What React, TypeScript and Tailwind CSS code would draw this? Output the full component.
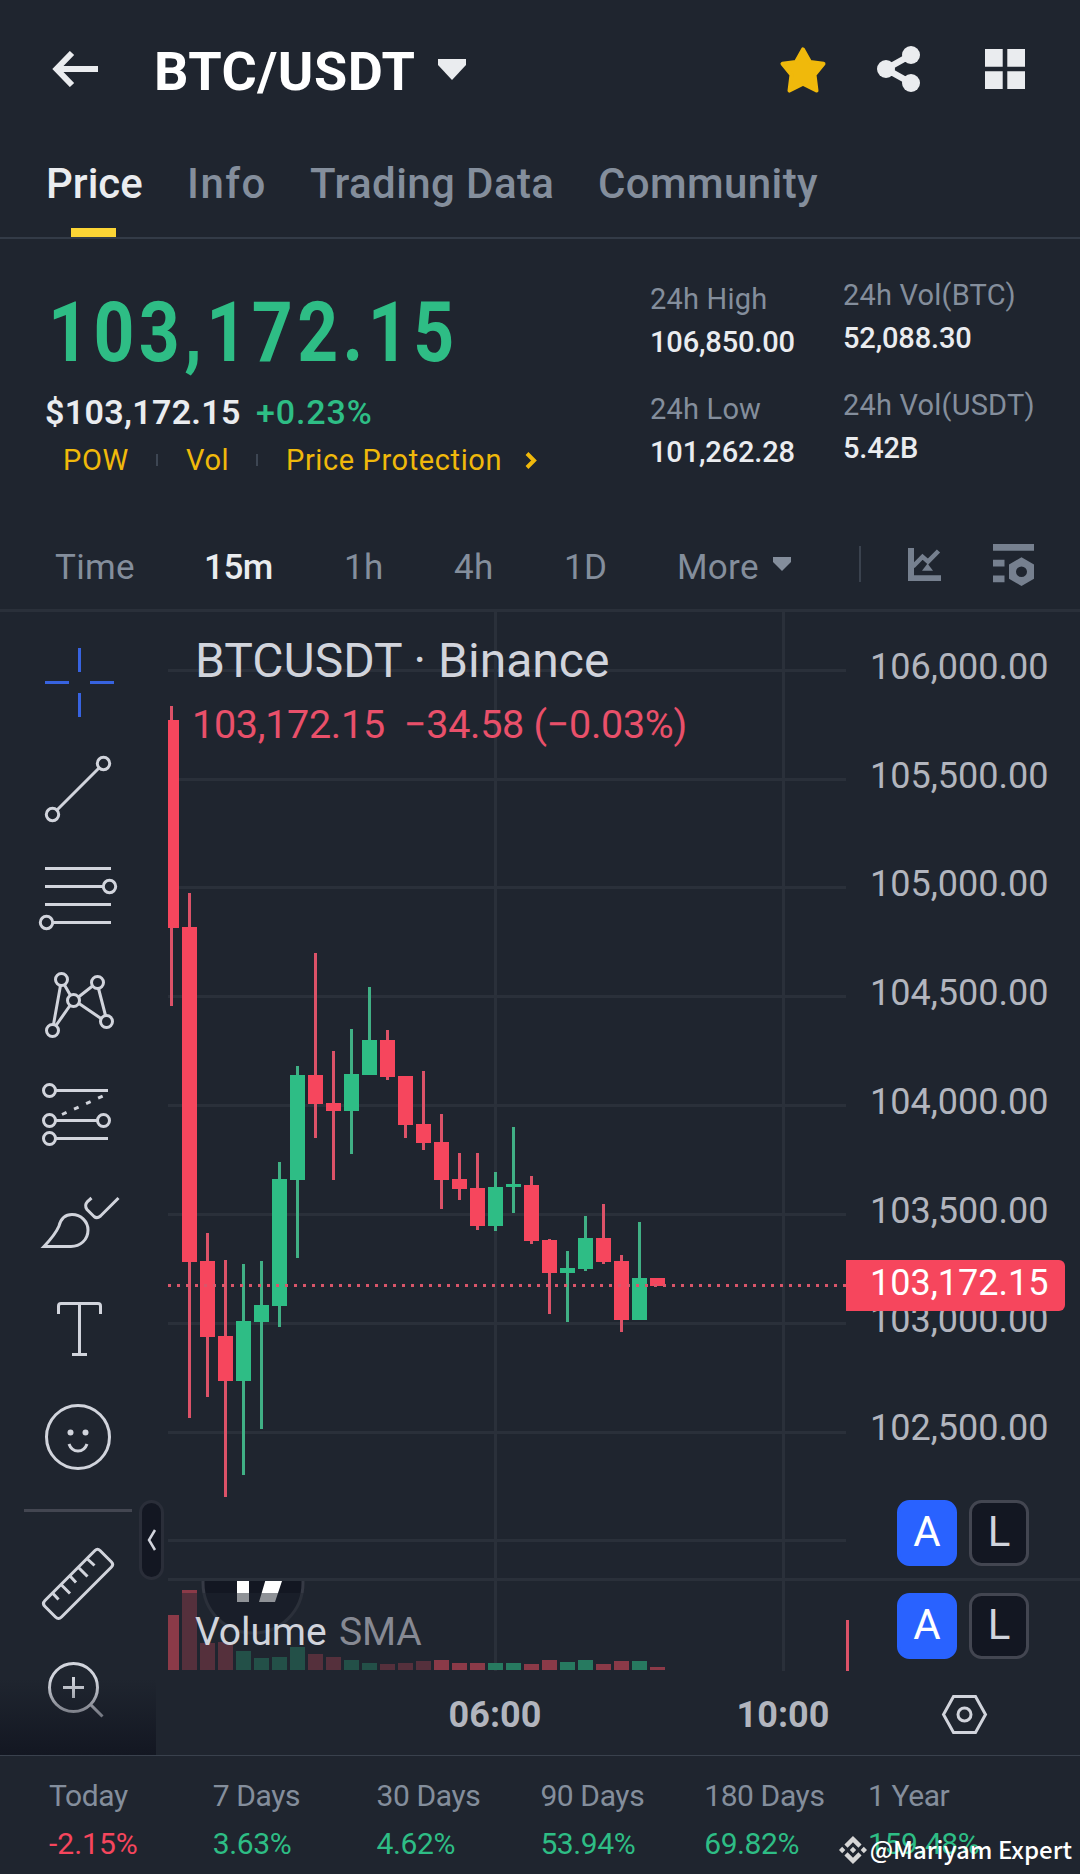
import type { ReactNode } from "react";
import { SiBinance } from "react-icons/si";

const UP = "#2ebd85";
const DOWN = "#f6465d";
const UP_WICK = "#40b085";
const DOWN_WICK = "#dc5268";

// [direction, high, low, body top, body bottom] in chart pixels
type Candle = ["u" | "d", number, number, number, number];

const candles: Candle[] = [
  ["d", 706, 1006, 720, 928],
  ["d", 893, 1418, 927, 1262],
  ["d", 1233, 1397, 1261, 1337],
  ["d", 1260, 1497, 1336, 1381],
  ["u", 1264, 1475, 1321, 1381],
  ["u", 1261, 1429, 1305, 1322],
  ["u", 1162, 1327, 1179, 1306],
  ["u", 1066, 1258, 1075, 1180],
  ["d", 953, 1138, 1075, 1104],
  ["d", 1051, 1180, 1103, 1111],
  ["u", 1029, 1154, 1074, 1111],
  ["u", 987, 1075, 1040, 1075],
  ["d", 1030, 1080, 1040, 1077],
  ["d", 1076, 1138, 1076, 1125],
  ["d", 1071, 1150, 1124, 1143],
  ["d", 1114, 1209, 1142, 1180],
  ["d", 1153, 1200, 1179, 1189],
  ["d", 1153, 1230, 1188, 1226],
  ["u", 1172, 1231, 1187, 1226],
  ["u", 1127, 1213, 1184, 1187],
  ["d", 1176, 1244, 1185, 1241],
  ["d", 1239, 1314, 1240, 1273],
  ["u", 1251, 1322, 1268, 1273],
  ["u", 1216, 1271, 1238, 1269],
  ["d", 1204, 1264, 1238, 1262],
  ["d", 1255, 1332, 1261, 1320],
  ["u", 1222, 1320, 1278, 1320],
  ["d", 1278, 1286, 1278, 1286],
];

const volumeTops = [
  1615, 1590, 1643, 1642, 1651, 1658, 1657, 1647, 1654, 1657, 1660, 1663, 1664, 1663,
  1661, 1660, 1663, 1663, 1663, 1663, 1664, 1660, 1662, 1660, 1664, 1661, 1661, 1667,
];

const gridLines = [669, 778, 886, 995, 1104, 1213, 1322, 1431, 1539];

const priceLabels: [string, number][] = [
  ["106,000.00", 666],
  ["105,500.00", 775],
  ["105,000.00", 883],
  ["104,500.00", 992],
  ["104,000.00", 1101],
  ["103,500.00", 1210],
  ["103,000.00", 1319],
  ["102,500.00", 1427],
];

const performance = [
  { label: "Today", value: "-2.15%", down: true },
  { label: "7 Days", value: "3.63%" },
  { label: "30 Days", value: "4.62%" },
  { label: "90 Days", value: "53.94%" },
  { label: "180 Days", value: "69.82%" },
  { label: "1 Year", value: "159.48%" },
];

export default function App() {
  return (
    <div className="relative flex h-[1874px] w-[1080px] flex-col overflow-hidden bg-[#1f252f] font-['Roboto',sans-serif] text-[#eaecef]">
      <Header />
      <Tabs />
      <Quote />
      <Timeframes />
      <div className="relative flex h-[1143px] shrink-0">
        <Toolbar />
        <Chart />
      </div>
      <Performance />
      <div className="absolute bottom-[7px] right-[8px] flex items-center gap-[3px] text-white">
        <SiBinance size={28} className="mt-0.5 text-[#d6d6d6]" />
        <span className="font-['Noto_Sans_CJK_SC',sans-serif] text-2xl font-medium leading-[36px]">
          @Mariyam Expert
        </span>
      </div>
    </div>
  );
}

function Header() {
  return (
    <header className="flex h-[142px] shrink-0 items-center">
      <svg width="46" height="36" viewBox="0 0 46 36" className="-mt-1 ml-[52px]" fill="none" stroke="#eaecef" strokeWidth="6">
        <path d="M20 2 4.5 18 20 34M5 18H46" />
      </svg>
      <h1 className="ml-[56px] mt-[2px] w-[284px] text-[54px] font-bold leading-none tracking-[0.5px] text-white">BTC/USDT</h1>
      <svg width="28" height="21" viewBox="0 0 28 21" fill="#eaecef" className="-mt-1">
        <path d="M0 0H28V6L14 21 0 6Z" />
      </svg>
      <svg width="48" height="48" viewBox="0 0 48 50" preserveAspectRatio="none" className="-mt-0.5 ml-[313px]" fill="#f0b90b" stroke="#f0b90b" strokeWidth="4" strokeLinejoin="round">
        <path d="M24 3.5 31 16.5 44.5 18.5 35.5 30 37.5 46.5 24 39.5 10.5 46.5 12.5 30 3.5 18.5 17 16.5Z" />
      </svg>
      <svg width="43" height="46" viewBox="0 0 43 46" className="-mt-1 ml-[50px]" fill="#eaecef">
        <path d="M34 9 9 23 34 37" fill="none" stroke="#eaecef" strokeWidth="6.5" />
        <circle cx="9" cy="23" r="9" />
        <circle cx="34" cy="9" r="9" />
        <circle cx="34" cy="37" r="9" />
      </svg>
      <svg width="40" height="40" viewBox="0 0 40 40" className="-mt-1 ml-[65px]" fill="#eaecef">
        <path d="M0 0h17.7v17.7H0zM22.3 0H40v17.7H22.3zM0 22.3h17.7V40H0zM22.3 22.3H40V40H22.3z" />
      </svg>
    </header>
  );
}

function Tabs() {
  return (
    <nav className="flex h-[97px] shrink-0 border-b-2 border-[#333b47] pl-[46px] text-[42px] font-medium leading-[84px] text-[#848e9c]">
      <div className="flex w-[141px] flex-col text-[#eaecef]">
        Price
        <span className="ml-[25px] mt-0.5 h-[9px] w-[45px] bg-[#fcd535]" />
      </div>
      <span className="w-[123px] tracking-[1.5px]">Info</span>
      <span className="w-[288px] tracking-[0.4px]">Trading Data</span>
      <span className="tracking-[0.4px]">Community</span>
    </nav>
  );
}

function Quote() {
  return (
    <section className="flex h-[285px] shrink-0">
      <div className="w-[650px] pt-[50px]">
        <div className="ml-[48px] w-[480px] origin-left scale-x-[0.86] text-[83px] font-bold leading-[88px] tracking-[5.2px] text-[#2ebd85]">
          103,172.15
        </div>
        <div className="ml-[45px] mt-3 flex text-[34px] font-semibold leading-[46px]">
          <span className="w-[211px] tracking-[0.3px]">$103,172.15</span>
          <span className="font-medium tracking-[0.9px] text-[#2ebd85]">+0.23%</span>
        </div>
        <div className="ml-[63px] mt-[9px] flex items-center text-[29px] leading-[32px] tracking-[0.6px] text-[#f0b90b]">
          <span className="w-[93px]">POW</span>
          <Tick />
          <span className="ml-[28px] w-[70px]">Vol</span>
          <Tick />
          <span className="ml-[28px] w-[239px]">Price Protection</span>
          <svg width="12" height="17" viewBox="0 0 12 17" fill="none" stroke="#f0b90b" strokeWidth="4">
            <path d="M2 1.5 9 8.5 2 15.5" />
          </svg>
        </div>
      </div>
      <div className="w-[193px] pt-[42px]">
        <Stat label="24h High" value="106,850.00" />
        <Stat label="24h Low" value="101,262.28" />
      </div>
      <div className="pt-[38px]">
        <Stat label="24h Vol(BTC)" value="52,088.30" />
        <Stat label="24h Vol(USDT)" value="5.42B" />
      </div>
    </section>
  );
}

function Tick() {
  return <span className="h-3 w-[2px] bg-[#3d4653]" />;
}

function Stat({ label, value }: { label: string; value: string }) {
  return (
    <div className="mb-[31px] flex flex-col gap-[7px] whitespace-nowrap text-[29px] leading-[36px]">
      <span className="tracking-[0.2px] text-[#848e9c]">{label}</span>
      <span className="font-medium tracking-[-0.15px]">{value}</span>
    </div>
  );
}

function Timeframes() {
  return (
    <div className="flex h-[88px] shrink-0 items-center border-b-[3px] border-[#2a303a] pl-[55px] pt-px text-[35px] leading-none tracking-[0.3px] text-[#848e9c]">
      <span className="w-[149px]">Time</span>
      <span className="w-[140px] font-medium tracking-[-0.5px] text-[#eaecef]">15m</span>
      <span className="w-[110px]">1h</span>
      <span className="w-[110px]">4h</span>
      <span className="w-[113px]">1D</span>
      <span className="w-[96px]">More</span>
      <svg width="18" height="14" viewBox="0 0 18 14" fill="#848e9c" className="-mt-[6px]">
        <path d="M0 0H18V5L9 14 0 5Z" />
      </svg>
      <span className="-mt-[6px] ml-[68px] h-9 w-[2px] bg-[#3a424e]" />
      <svg width="33" height="33" viewBox="0 0 33 34" preserveAspectRatio="none" className="-mt-[6px] ml-[47px]" fill="none" stroke="#76808f">
        <path d="M3 0V31H33" strokeWidth="6" />
        <path d="M5 19 14.5 9 20 14 30.5 3" strokeWidth="4.5" />
        <path d="M19.5 16 25 23.5H14Z" fill="#76808f" stroke="none" />
      </svg>
      <svg width="42" height="42" viewBox="0 0 42 44" preserveAspectRatio="none" className="-mt-1 ml-[52px]" fill="#76808f">
        <path d="M0 0h41v7H0zM0 16.5h11.5v7H0zM0 33h11.5v7H0z" />
        <path fillRule="evenodd" d="M28.5 14 41 21.5V36.5L28.5 44 16 36.5V21.5ZM28.5 23.5a5.5 5.5 0 1 0 0 11a5.5 5.5 0 1 0 0-11Z" />
      </svg>
    </div>
  );
}

function Tool({ children, color = "#d1d4dc" }: { children: ReactNode; color?: string }) {
  return (
    <svg width="156" height="108" viewBox="0 0 156 108" fill="none" stroke={color} strokeWidth="3" className="shrink-0">
      {children}
    </svg>
  );
}

function Toolbar() {
  return (
    <aside className="relative flex w-[168px] shrink-0 flex-col pt-4">
      {/* crosshair */}
      <Tool color="#3763e0">
        <path d="M79.5 20V44M79.5 65V89M45 54.5H69M90 54.5H114" />
      </Tool>
      {/* trend line */}
      <Tool>
        <circle cx="103.5" cy="27.5" r="6.2" />
        <circle cx="52.5" cy="78.5" r="6.2" />
        <path d="M57 74 99 32" />
      </Tool>
      {/* fib retracement */}
      <Tool>
        <path d="M45 24.5H111M45 42.5H103M45 60.5H111M53 78.5H111" />
        <circle cx="109.5" cy="42.5" r="6.2" />
        <circle cx="46.5" cy="78.5" r="6.2" />
      </Tool>
      {/* xabcd pattern */}
      <Tool>
        <circle cx="61.5" cy="27.5" r="6" />
        <circle cx="97.5" cy="30.5" r="6" />
        <circle cx="73.5" cy="48.5" r="6" />
        <circle cx="52.5" cy="78.5" r="6" />
        <circle cx="106.5" cy="69.5" r="6" />
        <path d="M60.5 33.5 53.5 72.5M64.5 33 70.5 43.5M56 73.5 70 53.5M78.5 45 92.5 34M79 51.5 101 66.5M98.5 36.5 105.5 63.5" />
      </Tool>
      {/* forecast */}
      <Tool>
        <circle cx="49.5" cy="30.5" r="6" />
        <circle cx="49.5" cy="60.5" r="6" />
        <circle cx="103.5" cy="60.5" r="6" />
        <circle cx="49.5" cy="78.5" r="6" />
        <path d="M56 30.5H108M56 60.5H97M56 78.5H108" />
        <path d="M62 54.5 103 36" strokeDasharray="5 8.2" />
      </Tool>
      {/* brush */}
      <Tool>
        <path d="M44 78.5C52 70 56 65 59 58C61 50 65 46.5 72 46.5C81 46.5 88 53.5 88 62C88 72 80 78.5 71 78.5Z" />
        <path d="M91.5 30 87.5 33.5Q84 37.5 87 41.5L94 48.5Q97 51 100.5 48L118.5 30" />
      </Tool>
      {/* text */}
      <Tool>
        <path d="M58.5 38V30Q58.5 27.5 61 27.5H98Q100.5 27.5 100.5 30V38M79.5 27.5V78.5M72 78.5H87" />
      </Tool>
      {/* emoji */}
      <Tool>
        <circle cx="78" cy="53" r="31.5" />
        <circle cx="70.5" cy="48.5" r="3" fill="#d1d4dc" stroke="none" />
        <circle cx="85.5" cy="48.5" r="3" fill="#d1d4dc" stroke="none" />
        <path d="M69 60Q71.5 67 78 67T87 60" />
      </Tool>
      <span className="mb-[19px] ml-6 mt-[17px] h-[3px] w-[108px] shrink-0 bg-[#434651]" />
      {/* ruler */}
      <Tool>
        <path
          strokeLinejoin="round"
          d="M95 19.5Q97.5 17 100 19.5L111.5 31Q114 33.5 111.5 36L61.5 86Q58.5 89 55.5 86L45 75.5Q42 72.5 45 69.5ZM53 62.5 58.5 68.5M61.5 54 70 62.5M70.5 45.5 76 51.5M79 37 87.5 45.5M88 28.5 94.5 34.5"
        />
      </Tool>
      {/* zoom in */}
      <Tool>
        <circle cx="73.5" cy="48.5" r="24" />
        <path d="M63 48.5H84M73.5 38V59M91 66 102.5 77.5" />
      </Tool>
      <div className="absolute bottom-0 left-0 h-[76px] w-[156px] bg-gradient-to-b from-transparent to-[#131722]" />
      {/* collapse handle */}
      <div className="absolute left-[139px] top-[888px] flex h-[80px] w-[25px] items-center justify-center rounded-full border-[3px] border-[#2a2e39] bg-[#131722]">
        <svg width="10" height="22" viewBox="0 0 10 22" fill="none" stroke="#d1d4dc" strokeWidth="2.5">
          <path d="M8 1 2 11 8 21" />
        </svg>
      </div>
    </aside>
  );
}

function ScaleButton({ x, y, label, active }: { x: number; y: number; label: string; active?: boolean }) {
  return (
    <g>
      <rect
        x={x + 1.5}
        y={y + 1.5}
        width="57"
        height="63"
        rx="11"
        fill={active ? "#2962ff" : "#131722"}
        stroke={active ? "#2962ff" : "#434651"}
        strokeWidth="3"
      />
      <text x={x + 30} y={y + 46} fontSize="42" textAnchor="middle" fill={active ? "#fff" : "#d1d4dc"}>
        {label}
      </text>
    </g>
  );
}

function Chart() {
  return (
    <svg width="912" height="1143" viewBox="168 612 912 1143" className="shrink-0">
      {gridLines.map((y) => (
        <rect key={y} x="168" y={y} width="678" height="3" fill="#2a303a" />
      ))}
      <rect x="494" y="612" width="3" height="1059" fill="#2a303a" />
      <rect x="782" y="612" width="3" height="1059" fill="#2a303a" />
      <rect x="168" y="1578" width="912" height="3" fill="#2a303a" />

      {/* logo, cut off by the pane border */}
      <clipPath id="volumePane">
        <rect x="168" y="1581" width="912" height="90" />
      </clipPath>
      <g clipPath="url(#volumePane)">
        <circle cx="253" cy="1583" r="50" fill="#131722" stroke="#363a45" strokeWidth="3" />
        <path d="M237 1575h12v27h-12zM267 1575h17l-9 27h-16z" fill="#fff" />
      </g>

      {volumeTops.map((top, i) => (
        <rect
          key={i}
          x={164 + i * 18}
          y={top}
          width="15"
          height={1670 - top}
          fill={candles[i][0] === "u" ? "#277a60" : "#8b3a48"}
        />
      ))}
      <rect x="181" y="1593" width="252" height="78" fill="#1f252f" fillOpacity="0.5" />
      <rect x="846" y="1620" width="3" height="51" fill="#dc5268" />

      {candles.map(([dir, high, low, top, bottom], i) => (
        <g key={i}>
          <rect x={170 + i * 18} y={high} width="3" height={low - high} fill={dir === "u" ? UP_WICK : DOWN_WICK} />
          <rect x={164 + i * 18} y={top} width="15" height={bottom - top} fill={dir === "u" ? UP : DOWN} />
        </g>
      ))}
      <path d="M168 1285.5H846" stroke="#d9566a" strokeWidth="3" strokeDasharray="3 6" />

      <text x="195" y="677" fontSize="48" fill="#d1d4dc">
        BTCUSDT · Binance
      </text>
      <g fontSize="39.5" letterSpacing="-0.3" fill="#e9506a">
        <text x="192" y="738">103,172.15</text>
        <text x="404" y="738">−34.58 (−0.03%)</text>
      </g>
      <g fontSize="39" letterSpacing="-0.1">
        <text x="195" y="1645" fill="#d1d4dc">Volume</text>
        <text x="339" y="1645" fill="#868993">SMA</text>
      </g>

      <g fontSize="36" fill="#b2b5be">
        {priceLabels.map(([label, y]) => (
          <text key={label} x="870" y={y + 13}>
            {label}
          </text>
        ))}
      </g>
      <path d="M846 1260H1059a6 6 0 0 1 6 6V1305a6 6 0 0 1-6 6H846Z" fill="#f6465d" />
      <text x="870" y="1295" fontSize="36" fill="#fff">
        103,172.15
      </text>

      <ScaleButton x={897} y={1500} label="A" active />
      <ScaleButton x={969} y={1500} label="L" />
      <ScaleButton x={897} y={1593} label="A" active />
      <ScaleButton x={969} y={1593} label="L" />

      <g fontSize="36" fontWeight="700" textAnchor="middle" fill="#b2b5be">
        <text x="495" y="1727">06:00</text>
        <text x="783" y="1727">10:00</text>
      </g>
      <g fill="none" stroke="#d1d4dc" strokeWidth="3">
        <path d="M953.5 1696.5H975.5L985.5 1714.5 975.5 1732.5H953.5L943.5 1714.5Z" />
        <circle cx="964.5" cy="1714.5" r="6.5" />
      </g>
    </svg>
  );
}

function Performance() {
  return (
    <footer className="flex h-[119px] shrink-0 border-t border-[#39414d] pl-[49px] pt-[22px] text-3xl leading-[36px]">
      {performance.map(({ label, value, down }) => (
        <div key={label} className="flex w-[163.8px] shrink-0 flex-col gap-3">
          <span className="tracking-[-0.4px] text-[#848e9c]">{label}</span>
          <span className={down ? "text-[#f6465d]" : "tracking-[-0.4px] text-[#2ebd85]"}>{value}</span>
        </div>
      ))}
    </footer>
  );
}
